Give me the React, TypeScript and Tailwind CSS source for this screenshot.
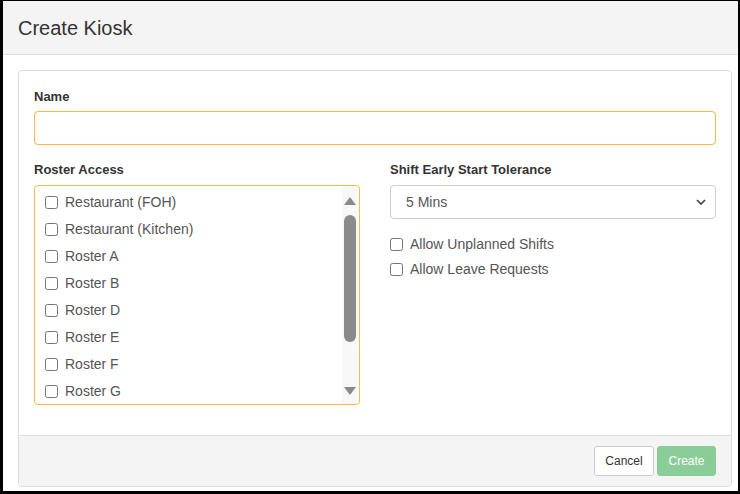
import React from "react";

const rosters = [
  "Restaurant (FOH)",
  "Restaurant (Kitchen)",
  "Roster A",
  "Roster B",
  "Roster D",
  "Roster E",
  "Roster F",
  "Roster G",
];

function Arrow({ down = false }: { down?: boolean }) {
  return (
    <svg width="12" height="8" viewBox="0 0 12 8" className="block">
      <path d={down ? "M0 0 L12 0 L6 8 Z" : "M6 0 L12 8 L0 8 Z"} fill="#8a8a8a" />
    </svg>
  );
}

function Check({ label, gap = "gap-[7px]" }: { label: string; gap?: string }) {
  return (
    <label className={`flex items-center ${gap} text-[14px] text-[#555]`}>
      <input type="checkbox" className="m-0 h-[13px] w-[13px] shrink-0" />
      <span>{label}</span>
    </label>
  );
}

export default function App() {
  return (
    <div
      className="box-border flex h-[494px] w-[740px] flex-col border-b-[3px] border-l-[3px] border-r-2 border-t border-black bg-white text-[#333]"
      style={{ fontFamily: '"Liberation Sans", Arial, sans-serif' }}
    >
      {/* modal header */}
      <div className="flex h-[54px] shrink-0 items-center border-b border-[#ddd] bg-[#f4f4f4] pl-[15px]">
        <h1 className="text-[20px] leading-none font-normal text-[#333]">Create Kiosk</h1>
      </div>

      {/* card */}
      <div className="mb-[4px] ml-[15px] mr-[6px] mt-[15px] flex flex-1 flex-col overflow-hidden rounded-[4px] border border-[#ddd]">
        <div className="flex-1 px-[15px] pt-[17px]">
          <label className="mb-[5px] block text-[13px] leading-[18px] font-bold">Name</label>
          <input
            type="text"
            className="box-border block h-[34px] w-full rounded-[4px] border border-[#fbb740] px-3 text-[14px] outline-none"
          />

          <div className="mt-[16px] grid grid-cols-2 gap-[30px]">
            <div>
              <label className="mb-[6px] block text-[13px] leading-[18px] font-bold">Roster Access</label>
              <div className="box-border flex h-[220px] overflow-hidden rounded-[4px] border border-[#fbb740]">
                <div className="flex flex-1 flex-col pl-[10px] pt-[3px]">
                  {rosters.map((r) => (
                    <div key={r} className="flex h-[27px] shrink-0 items-center">
                      <Check label={r} />
                    </div>
                  ))}
                </div>
                <div className="mr-[2px] flex w-[15px] flex-col items-center bg-[#f8f8f8] pb-[9px] pt-[11px]">
                  <Arrow />
                  <div className="mt-[10px] h-[127px] w-[12px] rounded-full bg-[#8a8a8a]" />
                  <div className="flex-1" />
                  <Arrow down />
                </div>
              </div>
            </div>

            <div>
              <label className="mb-[6px] block text-[13px] leading-[18px] font-bold">Shift Early Start Tolerance</label>
              <div className="box-border flex h-[34px] items-center justify-between rounded-[4px] border border-[#ccc] pl-[15px] pr-[9px] text-[14px] text-[#555]">
                <span>5 Mins</span>
                <svg width="10" height="6" viewBox="0 0 10 6">
                  <path d="M1 1 L5 5 L9 1" fill="none" stroke="#444" strokeWidth="1.7" />
                </svg>
              </div>
              <div className="mt-[13px] flex flex-col">
                <div className="flex h-[25px] items-center">
                  <Check label="Allow Unplanned Shifts" />
                </div>
                <div className="flex h-[25px] items-center">
                  <Check label="Allow Leave Requests" />
                </div>
              </div>
            </div>
          </div>
        </div>

        {/* card footer */}
        <div className="flex h-[51px] shrink-0 items-start justify-end gap-[3px] border-t border-[#ddd] bg-[#f4f4f4] pr-[15px] pt-[10px]">
          <button className="h-[30px] w-[60px] rounded-[3px] border border-[#ccc] bg-white text-[12px] text-[#333]">
            Cancel
          </button>
          <button className="h-[30px] w-[59px] rounded-[3px] border border-[#8bcd98] bg-[#8bcd98] text-[12px] text-white">
            Create
          </button>
        </div>
      </div>
    </div>
  );
}
